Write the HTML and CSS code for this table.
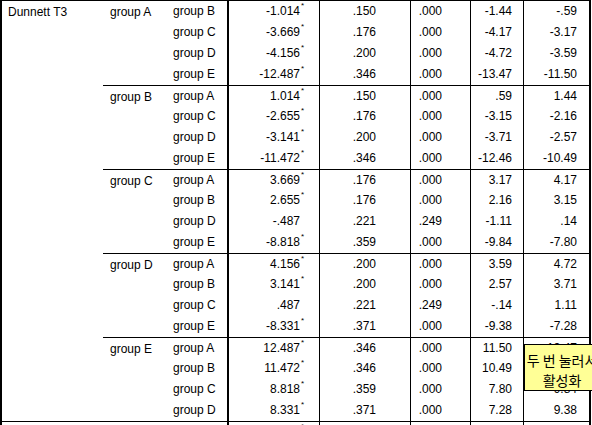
FILE: index.html
```html
<!DOCTYPE html>
<html>
<head>
<meta charset="utf-8">
<link rel="stylesheet" href="styles.css">
</head>
<body>
<div class="tbl">
  <div class="section">
    <div class="c1">Dunnett T3</div>
    <div class="body">
      <div class="grp">
        <div class="c2">group A</div>
        <div class="rows">
          <div class="row"><div class="c3">group B</div><div class="n c4">-1.014<sup>*</sup></div><div class="n c5">.150</div><div class="n c6">.000</div><div class="n c7">-1.44</div><div class="n c8">-.59</div></div>
          <div class="row"><div class="c3">group C</div><div class="n c4">-3.669<sup>*</sup></div><div class="n c5">.176</div><div class="n c6">.000</div><div class="n c7">-4.17</div><div class="n c8">-3.17</div></div>
          <div class="row"><div class="c3">group D</div><div class="n c4">-4.156<sup>*</sup></div><div class="n c5">.200</div><div class="n c6">.000</div><div class="n c7">-4.72</div><div class="n c8">-3.59</div></div>
          <div class="row"><div class="c3">group E</div><div class="n c4">-12.487<sup>*</sup></div><div class="n c5">.346</div><div class="n c6">.000</div><div class="n c7">-13.47</div><div class="n c8">-11.50</div></div>
        </div>
      </div>
      <div class="grp sep">
        <div class="c2">group B</div>
        <div class="rows">
          <div class="row"><div class="c3">group A</div><div class="n c4">1.014<sup>*</sup></div><div class="n c5">.150</div><div class="n c6">.000</div><div class="n c7">.59</div><div class="n c8">1.44</div></div>
          <div class="row"><div class="c3">group C</div><div class="n c4">-2.655<sup>*</sup></div><div class="n c5">.176</div><div class="n c6">.000</div><div class="n c7">-3.15</div><div class="n c8">-2.16</div></div>
          <div class="row"><div class="c3">group D</div><div class="n c4">-3.141<sup>*</sup></div><div class="n c5">.200</div><div class="n c6">.000</div><div class="n c7">-3.71</div><div class="n c8">-2.57</div></div>
          <div class="row"><div class="c3">group E</div><div class="n c4">-11.472<sup>*</sup></div><div class="n c5">.346</div><div class="n c6">.000</div><div class="n c7">-12.46</div><div class="n c8">-10.49</div></div>
        </div>
      </div>
      <div class="grp sep">
        <div class="c2">group C</div>
        <div class="rows">
          <div class="row"><div class="c3">group A</div><div class="n c4">3.669<sup>*</sup></div><div class="n c5">.176</div><div class="n c6">.000</div><div class="n c7">3.17</div><div class="n c8">4.17</div></div>
          <div class="row"><div class="c3">group B</div><div class="n c4">2.655<sup>*</sup></div><div class="n c5">.176</div><div class="n c6">.000</div><div class="n c7">2.16</div><div class="n c8">3.15</div></div>
          <div class="row"><div class="c3">group D</div><div class="n c4">-.487<sup></sup></div><div class="n c5">.221</div><div class="n c6">.249</div><div class="n c7">-1.11</div><div class="n c8">.14</div></div>
          <div class="row"><div class="c3">group E</div><div class="n c4">-8.818<sup>*</sup></div><div class="n c5">.359</div><div class="n c6">.000</div><div class="n c7">-9.84</div><div class="n c8">-7.80</div></div>
        </div>
      </div>
      <div class="grp sep">
        <div class="c2">group D</div>
        <div class="rows">
          <div class="row"><div class="c3">group A</div><div class="n c4">4.156<sup>*</sup></div><div class="n c5">.200</div><div class="n c6">.000</div><div class="n c7">3.59</div><div class="n c8">4.72</div></div>
          <div class="row"><div class="c3">group B</div><div class="n c4">3.141<sup>*</sup></div><div class="n c5">.200</div><div class="n c6">.000</div><div class="n c7">2.57</div><div class="n c8">3.71</div></div>
          <div class="row"><div class="c3">group C</div><div class="n c4">.487<sup></sup></div><div class="n c5">.221</div><div class="n c6">.249</div><div class="n c7">-.14</div><div class="n c8">1.11</div></div>
          <div class="row"><div class="c3">group E</div><div class="n c4">-8.331<sup>*</sup></div><div class="n c5">.371</div><div class="n c6">.000</div><div class="n c7">-9.38</div><div class="n c8">-7.28</div></div>
        </div>
      </div>
      <div class="grp sep">
        <div class="c2">group E</div>
        <div class="rows">
          <div class="row"><div class="c3">group A</div><div class="n c4">12.487<sup>*</sup></div><div class="n c5">.346</div><div class="n c6">.000</div><div class="n c7">11.50</div><div class="n c8">13.47</div></div>
          <div class="row"><div class="c3">group B</div><div class="n c4">11.472<sup>*</sup></div><div class="n c5">.346</div><div class="n c6">.000</div><div class="n c7">10.49</div><div class="n c8">12.46</div></div>
          <div class="row"><div class="c3">group C</div><div class="n c4">8.818<sup>*</sup></div><div class="n c5">.359</div><div class="n c6">.000</div><div class="n c7">7.80</div><div class="n c8">9.84</div></div>
          <div class="row"><div class="c3">group D</div><div class="n c4">8.331<sup>*</sup></div><div class="n c5">.371</div><div class="n c6">.000</div><div class="n c7">7.28</div><div class="n c8">9.38</div></div>
        </div>
      </div>
    </div>
  </div>
  <div class="section tail">
    <div class="c1"></div>
    <div class="c2"></div>
    <div class="row"><div class="c3"></div><div class="n c4"><sup>*</sup></div><div class="n c5"></div><div class="n c6"></div><div class="n c7"></div><div class="n c8"></div></div>
  </div>
</div>
<div class="tip">두 번 눌러서<br>활성화</div>
</body>
</html>
```

FILE: styles.css
```css
html, body {
  margin: 0;
  padding: 0;
  background: #fff;
  overflow: hidden;
  width: 592px;
  height: 425px;
}
body {
  font-family: "Liberation Sans", Arial, sans-serif;
  font-size: 12px;
  color: #000;
  position: relative;
}
.tbl {
  width: 591px;
  border-top: 1px solid #000;
}
.section {
  display: flex;
  border-bottom: 1px solid #000;
}
.c1 {
  flex: none;
  border-left: 2px solid #000;
  padding: 4px 0 0 6px;
  box-sizing: border-box;
  width: 103px;
  line-height: 14px;
}
.body {
  display: flex;
  flex-direction: column;
}
.grp {
  display: flex;
  height: 84px;
}
.grp.sep {
  border-top: 1px solid #000;
  height: 83px;
}
.c2 {
  width: 63px;
  flex: none;
  box-sizing: border-box;
  padding: 4px 0 0 7px;
  line-height: 14px;
}
.rows {
  display: flex;
  flex-direction: column;
}
.row {
  display: flex;
  height: 21px;
  line-height: 21px;
}
.grp.sep .row:first-child {
  height: 20px;
  line-height: 20px;
}
.c3 {
  width: 63px;
  flex: none;
  box-sizing: border-box;
  padding-left: 7px;
  border-right: 2px solid #000;
}
.n {
  flex: none;
  box-sizing: border-box;
  text-align: right;
  border-right: 1px solid #000;
  white-space: nowrap;
}
.n sup {
  display: inline-block;
  width: 5px;
  font-size: 8px;
  line-height: 8px;
  vertical-align: 7px;
  text-align: left;
  padding-left: 1px;
  box-sizing: border-box;
}
.c4 { width: 91px; padding-right: 14px; }
.c5 { width: 91px; padding-right: 34px; }
.c6 { width: 60px; padding-right: 28px; }
.c7 { width: 53px; padding-right: 11px; }
.c8 { width: 67px; padding-right: 12px; border-right-width: 2px; }
.tail {
  height: 20px;
  border-bottom: none;
}
.tip {
  position: absolute;
  left: 524px;
  top: 344px;
  width: 76px;
  height: 47px;
  box-sizing: border-box;
  background: #ffff96;
  border: 1px solid #000;
  font-family: "Noto Sans CJK KR", sans-serif;
  font-size: 14px;
  line-height: 20px;
  padding-top: 5px;
  text-align: center;
  white-space: nowrap;
}
```
